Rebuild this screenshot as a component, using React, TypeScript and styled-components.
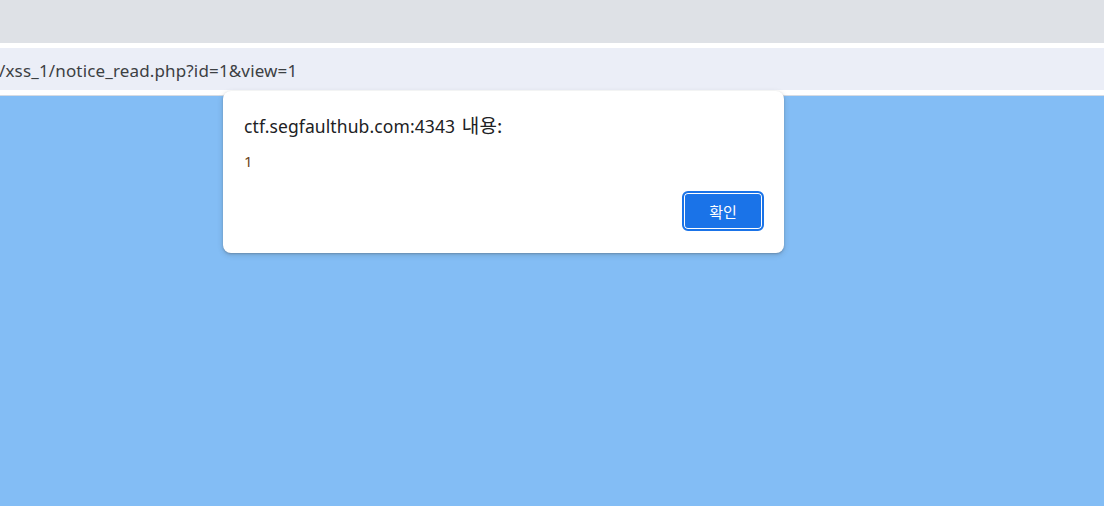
import styled, { createGlobalStyle } from 'styled-components'

const GlobalStyle = createGlobalStyle`
  html, body {
    margin: 0;
    padding: 0;
    height: 100%;
  }
  body {
    font-family: "Noto Sans", "Noto Sans CJK KR", sans-serif;
  }
  #root {
    height: 100%;
  }
`

function App() {
  return (
    <>
      <GlobalStyle />
      <Page>
        <TabStrip />
        <Gap />
        <AddressBar>
          <Url>/xss_1/notice_read.php?id=1&amp;view=1</Url>
        </AddressBar>
        <Gap />
        <Content />

        <Dialog role="alertdialog">
          <Title>
            ctf.segfaulthub.com:4343 <Korean>내용:</Korean>
          </Title>
          <Message>1</Message>
          <Actions>
            <OkButton autoFocus>확인</OkButton>
          </Actions>
        </Dialog>
      </Page>
    </>
  )
}

export default App

const Page = styled.div`
  position: relative;
  height: 100vh;
  display: flex;
  flex-direction: column;
  background: #ffffff;
  overflow: hidden;
`

const TabStrip = styled.div`
  height: 43px;
  flex-shrink: 0;
  background: #dee1e6;
`

const Gap = styled.div`
  height: 5px;
  flex-shrink: 0;
  background: #ffffff;
`

const AddressBar = styled.div`
  height: 42px;
  flex-shrink: 0;
  display: flex;
  align-items: center;
  background: #ebeef7;
`

const Url = styled.span`
  font-family: "Noto Sans", sans-serif;
  font-size: 17px;
  color: #3c4043;
  letter-spacing: 0.15px;
  margin-left: -1px;
  margin-top: 2px;
`

const Content = styled.div`
  flex: 1;
  background: #83bdf5;
  border-top: 1px solid #d6dbe3;
`

const Dialog = styled.div`
  position: absolute;
  top: 91px;
  left: 223px;
  width: 561px;
  box-sizing: border-box;
  padding: 21px 20px 22px 21px;
  background: #ffffff;
  border-radius: 8px;
  box-shadow: 0 1px 2px rgba(60, 64, 67, 0.3), 0 2px 5px 1px rgba(60, 64, 67, 0.15);
`

const Title = styled.div`
  font-family: "Noto Sans", "Noto Sans CJK KR", sans-serif;
  font-size: 17.5px;
  line-height: 26px;
  color: #202124;
  letter-spacing: 0.1px;
`

const Korean = styled.span`
  font-family: "Noto Sans CJK KR", sans-serif;
  font-size: 19px;
  margin-left: 2px;
`

const Message = styled.div`
  margin-top: 12px;
  font-family: "Noto Sans", sans-serif;
  font-size: 15px;
  line-height: 20px;
  color: #6e4520;
`

const Actions = styled.div`
  display: flex;
  justify-content: flex-end;
  margin-top: 20px;
`

const OkButton = styled.button`
  width: 82px;
  height: 40px;
  box-sizing: border-box;
  border: 2px solid #1a73e8;
  border-radius: 6px;
  background: #1a73e8;
  box-shadow: inset 0 0 0 1px #ffffff;
  color: #ffffff;
  font-family: "Noto Sans CJK KR", sans-serif;
  font-size: 15px;
  outline: none;
  cursor: pointer;
`
